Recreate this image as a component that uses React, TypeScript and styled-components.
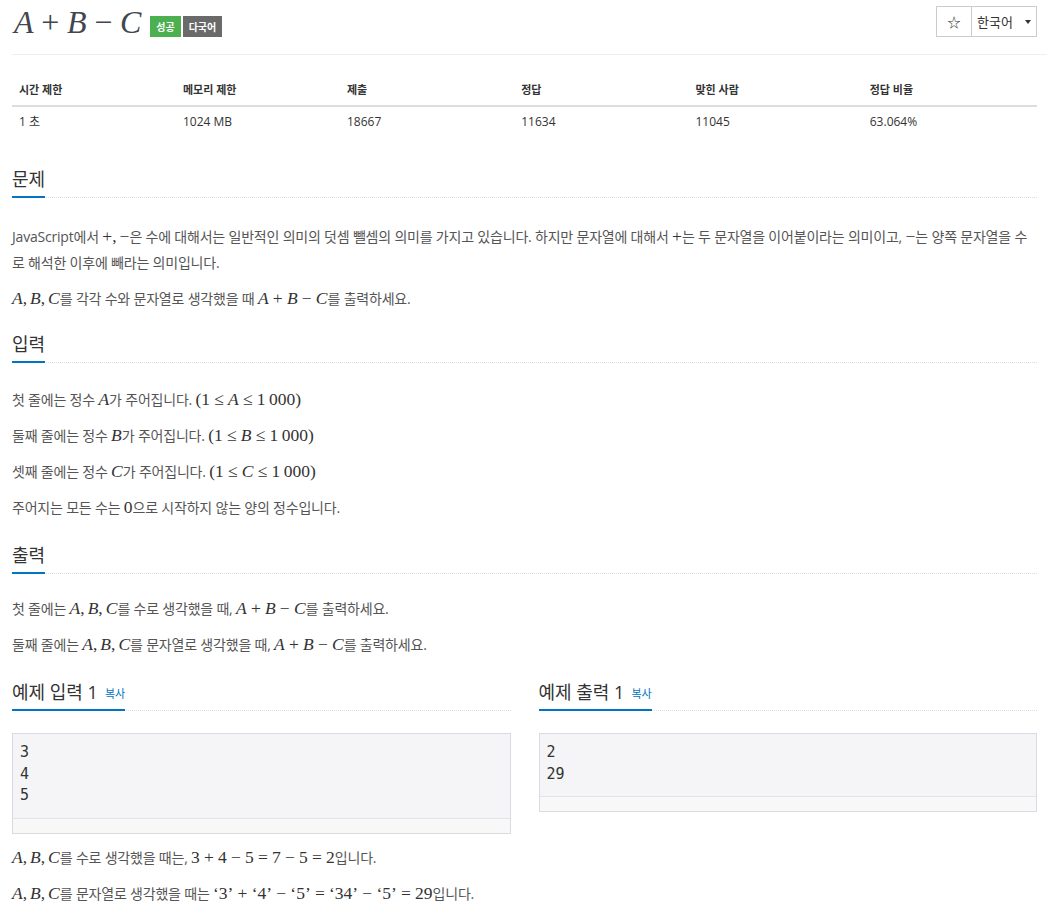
import React from "react";
import styled, { createGlobalStyle } from "styled-components";

const GlobalStyle = createGlobalStyle`
  body {
    margin: 0;
    background: #fff;
    font-family: "Open Sans", "Noto Sans CJK KR", sans-serif;
    color: #555;
  }
`;

const Page = styled.div`
  padding: 0 10px 40px 12px;
`;

const TitleBar = styled.div`
  display: flex;
  justify-content: space-between;
  align-items: flex-start;
  height: 55px;
  box-sizing: border-box;
  border-bottom: 1px solid #eee;
  margin-right: -10px;
  padding-right: 10px;
`;

const TitleRow = styled.div`
  display: flex;
  align-items: flex-start;
  padding-top: 5px;
`;

const TitleMath = styled.h1`
  margin: 0 9px 0 2px;
  font-family: "Liberation Serif", serif;
  font-weight: normal;
  font-size: 32px;
  line-height: 34px;
  color: #41464f;
`;

const Badge = styled.span<{ $tone: "green" | "gray" }>`
  margin-top: 11px;
  margin-right: 2px;
  height: 21px;
  padding: 0 6px;
  display: inline-flex;
  align-items: center;
  font-size: 10px;
  font-weight: bold;
  color: #fff;
  background: ${(p) => (p.$tone === "green" ? "#4caf50" : "#6a6a6a")};
`;

const ButtonGroup = styled.div`
  display: flex;
  margin-top: 6px;
`;

const GroupButton = styled.button<{ $w: number }>`
  width: ${(p) => p.$w}px;
  height: 31px;
  box-sizing: border-box;
  border: 1px solid #ccc;
  background: #fff;
  color: #333;
  font-family: "Open Sans", "Noto Sans CJK KR", sans-serif;
  font-size: 13px;
  display: flex;
  align-items: center;
  justify-content: center;
  gap: 12px;
  padding: 0;
  & + & {
    border-left: none;
  }
`;

const Caret = styled.span`
  width: 0;
  height: 0;
  border-left: 3px solid transparent;
  border-right: 3px solid transparent;
  border-top: 4px solid #333;
`;

const InfoTable = styled.table`
  width: 100%;
  border-collapse: collapse;
  margin-top: 20px;
  margin-bottom: 27px;
  color: #333;
`;

const Th = styled.th<{ $w: string }>`
  width: ${(p) => p.$w};
  text-align: left;
  font-size: 11px;
  font-weight: bold;
  padding: 7px 7px 8px;
  line-height: 15px;
  border-bottom: 2px solid #ddd;
`;

const Td = styled.td`
  font-size: 12px;
  padding: 6px 7px 9px;
  line-height: 17px;
`;

const Section = styled.section<{ $after?: number }>`
  margin-bottom: ${(p) => p.$after ?? 21}px;
`;

const Heading = styled.h2`
  margin: 0;
  display: flex;
  border-bottom: 1px dotted #ddd;
  font-size: 18px;
  font-weight: normal;
  line-height: 26px;
  color: #333;
`;

const HeadingLabel = styled.span`
  display: inline-flex;
  align-items: center;
  gap: 7px;
  height: 26px;
  padding-bottom: 4px;
  margin-bottom: -1px;
  border-bottom: 2px solid #0076c0;
`;

const CopyLink = styled.a`
  font-size: 11px;
  line-height: 1;
  padding-top: 3px;
  color: #0076c0;
  text-decoration: none;
`;

const Body = styled.div<{ $top: number }>`
  margin-top: ${(p) => p.$top}px;
`;

const Para = styled.p`
  margin: 0 0 10px;
  font-size: 14px;
  line-height: 26px;
  letter-spacing: -0.2px;
  &:last-child {
    margin-bottom: 0;
  }
`;

const M = styled.span`
  font-family: "Liberation Serif", serif;
  font-size: 17.5px;
  line-height: 1;
  letter-spacing: 0;
  color: #333;
  white-space: nowrap;
`;

const V = styled.i`
  font-style: italic;
`;

const Op = styled.span`
  margin: 0 0.24em;
`;

const Comma = styled.span`
  margin-right: 0.17em;
`;

const SampleGrid = styled.div`
  display: grid;
  grid-template-columns: 1fr 1fr;
  gap: 28px;
  align-items: start;
`;

const SampleBox = styled.div`
  border: 1px solid #d9dbe2;
  background: #f5f5f7;
`;

const SamplePre = styled.pre`
  margin: 0;
  padding: 8px 7px 11px;
  font-family: "DejaVu Sans Mono", monospace;
  font-size: 15px;
  line-height: 21.5px;
  color: #333;
`;

const ScrollStrip = styled.div`
  height: 14px;
  border-top: 1px solid #e2e3e8;
  background: #f8f8f9;
`;

const ABC = () => (
  <M>
    <V>A</V>
    <Comma>,</Comma>
    <V>B</V>
    <Comma>,</Comma>
    <V>C</V>
  </M>
);

const Expr = () => (
  <M>
    <V>A</V>
    <Op>+</Op>
    <V>B</V>
    <Op>−</Op>
    <V>C</V>
  </M>
);

const Range = ({ v }: { v: string }) => (
  <M>
    (1<Op>≤</Op>
    <V>{v}</V>
    <Op>≤</Op>1&#8201;000)
  </M>
);

const stats = [
  { label: "시간 제한", value: "1 초", w: "16%" },
  { label: "메모리 제한", value: "1024 MB", w: "16%" },
  { label: "제출", value: "18667", w: "17%" },
  { label: "정답", value: "11634", w: "17%" },
  { label: "맞힌 사람", value: "11045", w: "17%" },
  { label: "정답 비율", value: "63.064%", w: "17%" },
];

const SectionHead = ({ children }: { children: React.ReactNode }) => (
  <Heading>
    <HeadingLabel>{children}</HeadingLabel>
  </Heading>
);

export default function App() {
  return (
    <Page>
      <GlobalStyle />
      <TitleBar>
        <TitleRow>
          <TitleMath>
            <V>A</V>
            <Op>+</Op>
            <V>B</V>
            <Op>−</Op>
            <V>C</V>
          </TitleMath>
          <Badge $tone="green">성공</Badge>
          <Badge $tone="gray">다국어</Badge>
        </TitleRow>
        <ButtonGroup>
          <GroupButton $w={36}>☆</GroupButton>
          <GroupButton $w={65}>
            한국어
            <Caret />
          </GroupButton>
        </ButtonGroup>
      </TitleBar>

      <InfoTable>
        <thead>
          <tr>
            {stats.map((s) => (
              <Th key={s.label} $w={s.w}>
                {s.label}
              </Th>
            ))}
          </tr>
        </thead>
        <tbody>
          <tr>
            {stats.map((s) => (
              <Td key={s.label}>{s.value}</Td>
            ))}
          </tr>
        </tbody>
      </InfoTable>

      <Section $after={19}>
        <SectionHead>문제</SectionHead>
        <Body $top={26}>
          <Para>
            JavaScript에서{" "}
            <M>
              +<Comma>,</Comma>−
            </M>
            은 수에 대해서는 일반적인 의미의 덧셈 뺄셈의 의미를 가지고 있습니다. 하지만 문자열에 대해서{" "}
            <M>+</M>는 두 문자열을 이어붙이라는 의미이고, <M>−</M>는 양쪽 문자열을 수로 해석한 이후에
            빼라는 의미입니다.
          </Para>
          <Para>
            <ABC />를 각각 수와 문자열로 생각했을 때 <Expr />를 출력하세요.
          </Para>
        </Body>
      </Section>

      <Section>
        <SectionHead>입력</SectionHead>
        <Body $top={24}>
          <Para>
            첫 줄에는 정수 <M><V>A</V></M>가 주어집니다. <Range v="A" />
          </Para>
          <Para>
            둘째 줄에는 정수 <M><V>B</V></M>가 주어집니다. <Range v="B" />
          </Para>
          <Para>
            셋째 줄에는 정수 <M><V>C</V></M>가 주어집니다. <Range v="C" />
          </Para>
          <Para>
            주어지는 모든 수는 <M>0</M>으로 시작하지 않는 양의 정수입니다.
          </Para>
        </Body>
      </Section>

      <Section>
        <SectionHead>출력</SectionHead>
        <Body $top={22}>
          <Para>
            첫 줄에는 <ABC />를 수로 생각했을 때, <Expr />를 출력하세요.
          </Para>
          <Para>
            둘째 줄에는 <ABC />를 문자열로 생각했을 때, <Expr />를 출력하세요.
          </Para>
        </Body>
      </Section>

      <SampleGrid>
        <div>
          <SectionHead>
            예제 입력 1<CopyLink href="#">복사</CopyLink>
          </SectionHead>
          <Body $top={22}>
            <SampleBox>
              <SamplePre>{"3\n4\n5"}</SamplePre>
              <ScrollStrip />
            </SampleBox>
          </Body>
          <Body $top={11}>
            <Para>
              <ABC />를 수로 생각했을 때는,{" "}
              <M>
                3<Op>+</Op>4<Op>−</Op>5<Op>=</Op>7<Op>−</Op>5<Op>=</Op>2
              </M>
              입니다.
            </Para>
            <Para>
              <ABC />를 문자열로 생각했을 때는{" "}
              <M>
                ‘3’<Op>+</Op>‘4’<Op>−</Op>‘5’<Op>=</Op>‘34’<Op>−</Op>‘5’<Op>=</Op>29
              </M>
              입니다.
            </Para>
          </Body>
        </div>
        <div>
          <SectionHead>
            예제 출력 1<CopyLink href="#">복사</CopyLink>
          </SectionHead>
          <Body $top={22}>
            <SampleBox>
              <SamplePre>{"2\n29"}</SamplePre>
              <ScrollStrip />
            </SampleBox>
          </Body>
        </div>
      </SampleGrid>
    </Page>
  );
}
